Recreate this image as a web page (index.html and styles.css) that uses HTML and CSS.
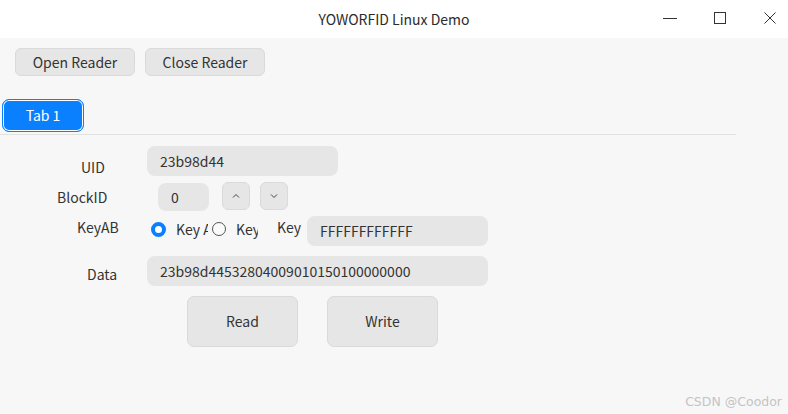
FILE: index.html
```html
<!DOCTYPE html>
<html>
<head>
<meta charset="utf-8">
<link rel="stylesheet" href="styles.css">
</head>
<body>
<div class="window">
  <div class="titlebar">
    <div class="title">YOWORFID Linux Demo</div>
    <div class="controls">
      <svg class="ctl" width="16" height="16" viewBox="0 0 16 16"><path d="M1 8.5H15" stroke="#333" stroke-width="1"/></svg>
      <svg class="ctl" width="16" height="16" viewBox="0 0 16 16"><rect x="2.5" y="2.5" width="11" height="11" fill="none" stroke="#333" stroke-width="1"/></svg>
      <svg class="ctl" width="16" height="16" viewBox="0 0 16 16"><path d="M2.5 2.5L13.5 13.5M13.5 2.5L2.5 13.5" stroke="#333" stroke-width="1"/></svg>
    </div>
  </div>
  <div class="toolbar">
    <button class="btn">Open Reader</button>
    <button class="btn">Close Reader</button>
  </div>
  <div class="tabs">
    <div class="tab">Tab 1</div>
  </div>
  <div class="sep"></div>
  <div class="form">
    <div class="row row-uid">
      <span class="label lbl-uid">UID</span>
      <div class="field f-uid">23b98d44</div>
    </div>
    <div class="row row-block">
      <span class="label lbl-block">BlockID</span>
      <div class="field f-block">0</div>
      <button class="spin spin-up"><svg width="10" height="8" viewBox="0 0 10 8"><path d="M2 5.5L5 2.5L8 5.5" fill="none" stroke="#444" stroke-width="1"/></svg></button>
      <button class="spin spin-down"><svg width="10" height="8" viewBox="0 0 10 8"><path d="M2 2.5L5 5.5L8 2.5" fill="none" stroke="#444" stroke-width="1"/></svg></button>
    </div>
    <div class="row row-key">
      <span class="label lbl-keyab">KeyAB</span>
      <div class="radio radio-a"><span class="dot checked"></span><span class="rtext">Key A</span></div>
      <div class="radio radio-b"><span class="dot"></span><span class="rtext">Key B</span></div>
      <span class="label lbl-key">Key</span>
      <div class="field f-key">FFFFFFFFFFFF</div>
    </div>
    <div class="row row-data">
      <span class="label lbl-data">Data</span>
      <div class="field f-data">23b98d44532804009010150100000000</div>
    </div>
    <div class="row row-actions">
      <button class="btn big btn-read">Read</button>
      <button class="btn big btn-write">Write</button>
    </div>
  </div>
  <div class="watermark">CSDN @Coodor</div>
</div>
</body>
</html>
```
FILE: styles.css
```css
* { box-sizing: border-box; }
html, body { margin: 0; padding: 0; }
body {
  width: 788px;
  height: 414px;
  overflow: hidden;
  background: #f7f7f7;
  font-family: "Noto Sans CJK SC", "Noto Sans", sans-serif;
  font-size: 14px;
  color: #333;
}
.window { position: relative; width: 788px; height: 414px; }
.titlebar {
  position: relative;
  height: 38px;
  background: #fff;
  display: flex;
  align-items: center;
  justify-content: center;
}
.title { font-size: 14px; color: #2b2b2b; line-height: 36px; }
.controls {
  position: absolute;
  right: 10px;
  top: 10px;
  display: flex;
  gap: 34px;
}
.ctl { display: block; }
.toolbar {
  display: flex;
  gap: 10px;
  padding: 10px 0 0 15px;
}
button { font-family: inherit; font-size: 14px; color: #333; padding: 0; }
.btn {
  width: 120px;
  height: 28px;
  background: #e6e6e6;
  border: 1px solid #dadada;
  border-radius: 6px;
  line-height: 24px;
}
.tabs { padding: 23px 0 0 2px; }
.tab {
  width: 82px;
  height: 33px;
  background: #0a80ff;
  border: 1px solid #0a80ff;
  box-shadow: inset 0 0 0 1px #fff;
  border-radius: 7px;
  color: #fff;
  text-align: center;
  line-height: 30px;
}
.sep {
  margin-top: 2px;
  width: 736px;
  height: 1px;
  background: #e2e2e2;
}
.form { display: flex; flex-direction: column; }
.row { display: flex; align-items: flex-start; position: relative; }
.field {
  flex: none;
  background: #e6e6e6;
  border-radius: 8px;
  height: 30px;
  line-height: 30px;
  padding-left: 13px;
  color: #333;
}
.label { flex: none; line-height: 20px; white-space: nowrap; }
.row-uid { margin-top: 11px; height: 30px; }
.lbl-uid { margin-left: 81px; width: 24px; margin-top: 11px; }
.f-uid { margin-left: 42px; width: 191px; }
.row-block { margin-top: 6px; height: 29px; }
.lbl-block { margin-left: 57px; width: 51px; margin-top: 5px; }
.f-block { margin-left: 50px; margin-top: 1px; width: 51px; height: 28px; line-height: 28px; }
.spin {
  flex: none;
  width: 28px;
  height: 28px;
  background: #e6e6e6;
  border: 1px solid #dadada;
  border-radius: 6px;
  display: flex;
  align-items: center;
  justify-content: center;
}
.spin-up { margin-left: 13px; }
.spin-down { margin-left: 10px; }
.row-key { margin-top: 5px; height: 30px; }
.lbl-keyab { margin-left: 77px; width: 42px; margin-top: 1px; }
.radio {
  flex: none;
  display: flex;
  align-items: center;
  overflow: hidden;
  height: 20px;
  margin-top: 3px;
  white-space: nowrap;
}
.radio-a { margin-left: 32px; width: 57px; }
.radio-b { margin-left: 4px; width: 46px; }
.dot {
  flex: none;
  width: 15px;
  height: 15px;
  border-radius: 50%;
  border: 1px solid #555;
  background: #fafafa;
}
.dot.checked { border: 4px solid #0a80ff; background: #fff; }
.rtext { margin-left: 10px; }
.radio-b .dot { width: 14px; height: 14px; }
.lbl-key { margin-left: 19px; width: 24px; margin-top: 1px; }
.f-key { margin-left: 6px; width: 181px; }
.row-data { margin-top: 10px; height: 30px; }
.lbl-data { margin-left: 87px; width: 30px; margin-top: 8px; }
.f-data { margin-left: 30px; width: 341px; }
.row-actions { margin-top: 10px; }
.big {
  flex: none;
  width: 111px;
  height: 51px;
  line-height: 47px;
  border-radius: 7px;
}
.btn-read { margin-left: 187px; }
.btn-write { margin-left: 29px; }
.watermark {
  position: absolute;
  right: 6px;
  bottom: 5px;
  font-family: "DejaVu Sans", sans-serif;
  font-size: 12.5px;
  color: #c4c4c4;
}
```
